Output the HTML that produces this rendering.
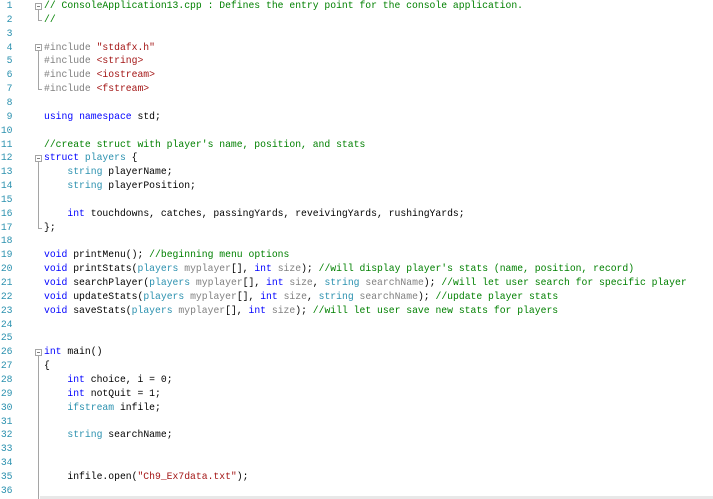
<!DOCTYPE html>
<html><head><meta charset="utf-8"><style>
html,body{margin:0;padding:0;background:#fff;width:713px;height:499px;overflow:hidden;position:relative}
.l{position:absolute;left:0;height:13.85px;line-height:13.85px;font-family:"Liberation Mono",monospace;font-size:9.74px;white-space:pre;color:#000}
.n{position:absolute;left:0;width:12.5px;text-align:right;color:#2b91af}
.c0{position:absolute;left:44px}
.k{color:#0000ff}.t{color:#2b91af}.c{color:#008000}.s{color:#a31515}.p{color:#808080}.g{color:#808080}
.v{position:absolute;left:38px;width:1px;background:#a5a5a5}
.h{position:absolute;left:38px;width:4px;height:1px;background:#a5a5a5}
.b{position:absolute;left:35px;width:7px;height:7px;border:1px solid #a5a5a5;box-sizing:border-box;background:#fff}
.b:after{content:"";position:absolute;left:1px;top:2px;width:3px;height:1px;background:#808080}
</style></head><body>
<div class="v" style="top:7px;height:14px"></div><div class="h" style="top:20px"></div>
<div class="v" style="top:48px;height:42px"></div><div class="h" style="top:89px"></div>
<div class="v" style="top:159px;height:70px"></div><div class="h" style="top:228px"></div>
<div class="v" style="top:353px;height:146px"></div>
<div class="b" style="top:3px"></div>
<div class="b" style="top:44px"></div>
<div class="b" style="top:155px"></div>
<div class="b" style="top:349px"></div>
<div style="position:absolute;left:40px;top:496px;width:673px;height:3px;background:#e8e8e8"></div>
<div class="l" style="top:-1px"><span class="n">1</span><span class="c0"><span class="c">// ConsoleApplication13.cpp : Defines the entry point for the console application.</span></span></div>
<div class="l" style="top:12.85px"><span class="n">2</span><span class="c0"><span class="c">//</span></span></div>
<div class="l" style="top:26.7px"><span class="n">3</span></div>
<div class="l" style="top:40.55px"><span class="n">4</span><span class="c0"><span class="p">#include </span><span class="s">"stdafx.h"</span></span></div>
<div class="l" style="top:54.4px"><span class="n">5</span><span class="c0"><span class="p">#include </span><span class="s">&lt;string&gt;</span></span></div>
<div class="l" style="top:68.25px"><span class="n">6</span><span class="c0"><span class="p">#include </span><span class="s">&lt;iostream&gt;</span></span></div>
<div class="l" style="top:82.1px"><span class="n">7</span><span class="c0"><span class="p">#include </span><span class="s">&lt;fstream&gt;</span></span></div>
<div class="l" style="top:95.95px"><span class="n">8</span></div>
<div class="l" style="top:109.8px"><span class="n">9</span><span class="c0"><span class="k">using</span> <span class="k">namespace</span> std;</span></div>
<div class="l" style="top:123.65px"><span class="n">10</span></div>
<div class="l" style="top:137.5px"><span class="n">11</span><span class="c0"><span class="c">//create struct with player's name, position, and stats</span></span></div>
<div class="l" style="top:151.35px"><span class="n">12</span><span class="c0"><span class="k">struct</span> <span class="t">players</span> {</span></div>
<div class="l" style="top:165.2px"><span class="n">13</span><span class="c0">    <span class="t">string</span> playerName;</span></div>
<div class="l" style="top:179.05px"><span class="n">14</span><span class="c0">    <span class="t">string</span> playerPosition;</span></div>
<div class="l" style="top:192.9px"><span class="n">15</span></div>
<div class="l" style="top:206.75px"><span class="n">16</span><span class="c0">    <span class="k">int</span> touchdowns, catches, passingYards, reveivingYards, rushingYards;</span></div>
<div class="l" style="top:220.6px"><span class="n">17</span><span class="c0">};</span></div>
<div class="l" style="top:234.45px"><span class="n">18</span></div>
<div class="l" style="top:248.3px"><span class="n">19</span><span class="c0"><span class="k">void</span> printMenu(); <span class="c">//beginning menu options</span></span></div>
<div class="l" style="top:262.15px"><span class="n">20</span><span class="c0"><span class="k">void</span> printStats(<span class="t">players</span> <span class="g">myplayer</span>[], <span class="k">int</span> <span class="g">size</span>); <span class="c">//will display player's stats (name, position, record)</span></span></div>
<div class="l" style="top:276px"><span class="n">21</span><span class="c0"><span class="k">void</span> searchPlayer(<span class="t">players</span> <span class="g">myplayer</span>[], <span class="k">int</span> <span class="g">size</span>, <span class="t">string</span> <span class="g">searchName</span>); <span class="c">//will let user search for specific player</span></span></div>
<div class="l" style="top:289.85px"><span class="n">22</span><span class="c0"><span class="k">void</span> updateStats(<span class="t">players</span> <span class="g">myplayer</span>[], <span class="k">int</span> <span class="g">size</span>, <span class="t">string</span> <span class="g">searchName</span>); <span class="c">//update player stats</span></span></div>
<div class="l" style="top:303.7px"><span class="n">23</span><span class="c0"><span class="k">void</span> saveStats(<span class="t">players</span> <span class="g">myplayer</span>[], <span class="k">int</span> <span class="g">size</span>); <span class="c">//will let user save new stats for players</span></span></div>
<div class="l" style="top:317.55px"><span class="n">24</span></div>
<div class="l" style="top:331.4px"><span class="n">25</span></div>
<div class="l" style="top:345.25px"><span class="n">26</span><span class="c0"><span class="k">int</span> main()</span></div>
<div class="l" style="top:359.1px"><span class="n">27</span><span class="c0">{</span></div>
<div class="l" style="top:372.95px"><span class="n">28</span><span class="c0">    <span class="k">int</span> choice, i = 0;</span></div>
<div class="l" style="top:386.8px"><span class="n">29</span><span class="c0">    <span class="k">int</span> notQuit = 1;</span></div>
<div class="l" style="top:400.65px"><span class="n">30</span><span class="c0">    <span class="t">ifstream</span> infile;</span></div>
<div class="l" style="top:414.5px"><span class="n">31</span></div>
<div class="l" style="top:428.35px"><span class="n">32</span><span class="c0">    <span class="t">string</span> searchName;</span></div>
<div class="l" style="top:442.2px"><span class="n">33</span></div>
<div class="l" style="top:456.05px"><span class="n">34</span></div>
<div class="l" style="top:469.9px"><span class="n">35</span><span class="c0">    infile.open(<span class="s">"Ch9_Ex7data.txt"</span>);</span></div>
<div class="l" style="top:483.75px"><span class="n">36</span></div>
</body></html>
